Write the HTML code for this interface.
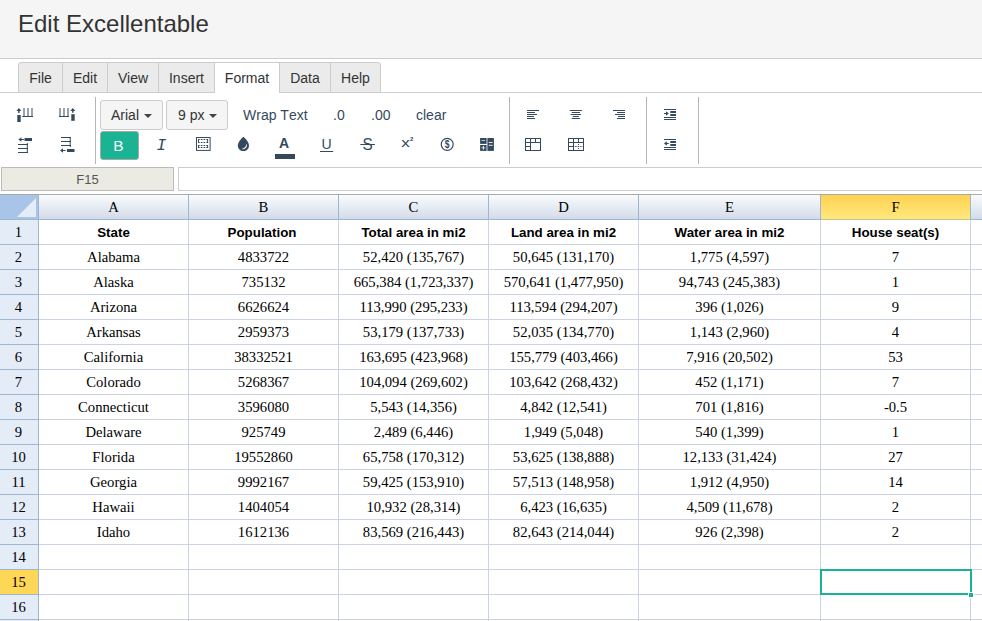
<!DOCTYPE html>
<html><head><meta charset="utf-8"><title>Edit Excellentable</title>
<style>
*{box-sizing:border-box;margin:0;padding:0}
html,body{width:982px;height:621px;overflow:hidden;background:#fff}
body{position:relative;font-family:"Liberation Sans",Arial,sans-serif;color:#333}
.abs{position:absolute}
#hdr{position:absolute;left:0;top:0;width:982px;height:59px;background:#f5f5f5;border-bottom:1px solid #ccc}
#title{position:absolute;left:18px;top:10px;font-size:24px;line-height:28px;color:#333;white-space:nowrap}
#tabs{position:absolute;left:18px;top:62px;height:31px;display:flex;border:1px solid #ccc;border-radius:3px 3px 0 0;background:#ebebeb}
#tabline{position:absolute;left:0;top:92px;width:982px;height:1px;background:#ccc}
.tab{height:29px;line-height:31px;font-size:14px;color:#333;text-align:center;border-right:1px solid #ccc}
.tab:last-child{border-right:0}
.tab.act{background:#fff;height:30px}
.sep{position:absolute;top:97px;width:1px;height:67px;background:#b4b6ba}
.dd{position:absolute;top:100px;height:30px;border:1px solid #ccc;border-radius:3px;background:#f5f5f5;font-size:14px;line-height:29px;color:#333;white-space:nowrap}
.tt{font-kerning:none;position:absolute;top:100px;height:30px;font-size:14px;line-height:31px;color:#34495e;white-space:nowrap}
.caret{display:inline-block;width:0;height:0;border-left:4px solid transparent;border-right:4px solid transparent;border-top:4px solid #444;vertical-align:middle;margin-left:5px;margin-top:-1px}
.ic{position:absolute}
#bold{position:absolute;left:100px;top:130.6px;width:39px;height:29.4px;background:#1ab394;border:1px solid #a9a9a0;border-radius:3px;color:#fff;font-size:15.5px;line-height:27px;text-align:center;padding-right:2px}
#name{position:absolute;left:1px;top:167px;width:173px;height:24px;background:#ecebe3;border:1px solid #bbb;font-size:13px;line-height:24px;text-align:center;color:#555}
#fx{position:absolute;left:178px;top:167px;width:810px;height:24px;background:#fff;border:1px solid #ccc}
#gridtop{position:absolute;left:0;top:194px;width:982px;height:1px;background:#aaa}
.ch{position:absolute;top:195px;height:25px;border-right:1px solid #9eb6ce;border-bottom:1px solid #9eb6ce;background:linear-gradient(#f9fcfd,#d3dbe9);font-family:"Liberation Serif",serif;font-size:14.667px;line-height:24px;text-align:center;color:#000}
.ch.sel{background:linear-gradient(#ffd150,#ffe97e);border-bottom-color:#c9c08f}
.rh{position:absolute;left:0;width:39px;height:25px;border-right:1px solid #9eb6ce;border-bottom:1px solid #9eb6ce;background:#e4ecf7;font-family:"Liberation Serif",serif;font-size:14.667px;line-height:24px;text-align:center;color:#000;padding-right:1px}
.rh.sel{background:#ffd757}
.cell{position:absolute;height:25px;border-right:1px solid #ccd3e6;border-bottom:1px solid #ccd3e6;font-family:"Liberation Serif",serif;font-size:14.667px;line-height:24px;text-align:center;color:#000;white-space:nowrap;overflow:hidden}
.cell.hd{font-family:"Liberation Sans",sans-serif;font-weight:bold;font-size:13.333px;line-height:26px}
.cell.pop{padding-right:3px}
#corner{position:absolute;left:0;top:195px;width:39px;height:25px;background:#a9c4e9;border-right:1px solid #9eb6ce;border-bottom:1px solid #9eb6ce}
#sel{position:absolute;left:820px;top:569px;width:152px;height:26px;border:2px solid #1ab394}
#selh{position:absolute;left:968px;top:592px;width:6px;height:6px;background:#1ab394;border:1px solid #fff}
</style></head><body>
<div id="hdr"><div id="title">Edit Excellentable</div></div>
<div id="tabline"></div>
<div id="tabs">
<div class="tab" style="width:44px">File</div><div class="tab" style="width:45px">Edit</div><div class="tab" style="width:51px">View</div><div class="tab" style="width:56px">Insert</div><div class="tab act" style="width:65px">Format</div><div class="tab" style="width:51px">Data</div><div class="tab" style="width:49px">Help</div>
</div>
<div class="sep" style="left:95px"></div>
<div class="sep" style="left:509px"></div>
<div class="sep" style="left:646px"></div>
<div class="sep" style="left:698px"></div>
<div class="dd" style="left:100px;width:63px;padding-left:10px">Arial<span class="caret"></span></div>
<div class="dd" style="left:166px;width:62px;padding-left:11px">9 px<span class="caret"></span></div>
<div class="tt" style="left:243px">Wrap Text</div>
<div class="tt" style="left:333px">.0</div>
<div class="tt" style="left:371px">.00</div>
<div class="tt" style="left:416px">clear</div>
<div id="bold">B</div>
<svg class="ic" style="left:0;top:0" width="982" height="170" viewBox="0 0 982 170" fill="#34495e" stroke="none" shape-rendering="auto">
<!-- icon1: insert col left -->
<g>
<path d="M18.9 108 L21.4 111 H19.6 V113 H18.2 V111 H16.4 Z"/>
<rect x="17.3" y="115" width="3.4" height="7"/>
<rect x="22.3" y="116" width="10.7" height="1"/><rect x="23.5" y="108" width="1" height="9"/><rect x="27.5" y="108" width="1" height="9"/><rect x="31.5" y="108" width="1" height="9"/>
</g>
<!-- icon2 -->
<g>
<path d="M72.8 108 L75.3 111 H73.5 V112.8 H72.1 V111 H70.3 Z"/>
<rect x="71.3" y="114.2" width="3.4" height="6.6"/>
<rect x="59" y="116" width="10" height="1"/><rect x="59.5" y="108" width="1" height="9"/><rect x="63.5" y="108" width="1" height="9"/><rect x="67.5" y="108" width="1" height="9"/>
</g>
<!-- icon3 -->
<g>
<path d="M18.4 139.5 L21.4 137.2 V138.9 H24 V140.1 H21.4 V141.8 Z"/>
<rect x="24.5" y="138" width="7.5" height="3"/>
<rect x="18" y="144" width="10" height="1"/><rect x="18" y="148" width="10" height="1"/><rect x="18" y="152" width="10" height="1"/><rect x="26.8" y="143" width="1" height="10"/>
</g>
<!-- icon4 -->
<g>
<path d="M60 150.5 L63 148.2 V149.9 H65.6 V151.1 H63 V152.8 Z"/>
<rect x="67" y="149" width="7.5" height="3"/>
<rect x="61" y="137" width="10" height="1"/><rect x="61" y="141" width="10" height="1"/><rect x="61" y="145" width="10" height="1"/><rect x="69.7" y="137" width="1" height="10"/>
</g>
<!-- italic -->
<text x="156.6" y="150.1" font-family="Liberation Mono,monospace" font-style="italic" font-size="16.5" fill="#34495e">I</text>
<!-- border icon -->
<rect x="196.5" y="137.5" width="13.6" height="12.9" fill="none" stroke="#34495e" stroke-width="1"/>
<path d="M198 139.5 H208 M198 142.5 H208 M198 145.5 H208 M198 147.5 H208" fill="none" stroke="#34495e" stroke-width="1" stroke-dasharray="1.7 1.07"/>
<path d="M198.5 139 V143 M207.6 139 V143 M198.5 145 V148 M207.6 145 V148" fill="none" stroke="#34495e" stroke-width="1"/>
<!-- tint -->
<path d="M243.4 136.7 C246.3 139.4 249 142.4 249 145.7 C249 148.7 246.5 151 243.4 151 C240.3 151 237.8 148.7 237.8 145.7 C237.8 142.4 240.5 139.4 243.4 136.7 Z"/>
<path d="M246.9 143.6 C247.7 147.7 244.8 149.9 241.6 148.9 C244.4 148.5 246.1 146.6 246.9 143.6 Z" fill="#fff"/>
<!-- A -->
<text x="284" y="148" text-anchor="middle" font-family="Liberation Sans,sans-serif" font-weight="bold" font-size="14">A</text>
<rect x="275" y="154" width="20" height="5"/>
<!-- U -->
<text x="326.6" y="149.3" text-anchor="middle" font-family="Liberation Sans,sans-serif" font-size="14">U</text>
<rect x="320" y="151" width="13.2" height="1"/>
<!-- S -->
<text transform="translate(367.7,150) scale(1,1.13)" text-anchor="middle" font-family="Liberation Sans,sans-serif" font-size="15.3">S</text>
<rect x="360.3" y="144" width="14.6" height="1"/>
<!-- x2 -->
<text transform="translate(401.3,147.2) scale(1.27,1)" font-family="Liberation Sans,sans-serif" font-size="13.5">x</text>
<text x="410" y="140.5" font-family="Liberation Sans,sans-serif" font-weight="bold" font-size="6">2</text>
<!-- dollar -->
<circle cx="447.2" cy="144.3" r="6" fill="none" stroke="#34495e" stroke-width="1.15"/>
<text transform="translate(447.2,147.7) scale(0.82,1)" text-anchor="middle" font-family="Liberation Sans,sans-serif" font-weight="bold" font-size="10.5">$</text>
<!-- calc grid -->
<rect x="480.1" y="138" width="6.5" height="5.9"/><rect x="480.1" y="145" width="6.5" height="5.9"/><rect x="487.4" y="138" width="6.5" height="12.9"/>
<rect x="481.6" y="140" width="3.4" height="1" fill="#c5cad3"/>
<rect x="481.4" y="147.3" width="4" height="1" fill="#c5cad3"/><rect x="482.9" y="145.9" width="1" height="3.8" fill="#d5ecd8"/>
<rect x="488.8" y="142" width="3.8" height="1" fill="#e8eaee"/><rect x="488.8" y="144.8" width="3.8" height="1" fill="#e8eaee"/>
<!-- align left -->
<rect x="527" y="110" width="12" height="1"/><rect x="527" y="112" width="8" height="1"/><rect x="527" y="114" width="10" height="1"/><rect x="527" y="116" width="7" height="1"/><rect x="527" y="118" width="8" height="1"/>
<!-- align center -->
<rect x="569.7" y="110" width="12.2" height="1"/><rect x="571.7" y="112" width="8.2" height="1"/><rect x="570.7" y="114" width="10.2" height="1"/><rect x="572.7" y="116" width="6.2" height="1"/><rect x="571.7" y="118" width="8.2" height="1"/>
<!-- align right -->
<rect x="613" y="110" width="12" height="1"/><rect x="617" y="112" width="8" height="1"/><rect x="615" y="114" width="10" height="1"/><rect x="618" y="116" width="7" height="1"/><rect x="617" y="118" width="8" height="1"/>
<!-- merge -->
<g fill="none" stroke="#34495e" stroke-width="1">
<rect x="525.5" y="138.5" width="15" height="12"/>
<path d="M525.5 142.5 H540.5 M525.5 146.5 H530.5 M530.5 138.5 V150.5 M535.5 138.5 V142.5"/>
<rect x="568.5" y="138.5" width="15" height="12"/>
<path d="M568.5 142.5 H583.5 M568.5 146.5 H573.5 M573.5 138.5 V150.5 M578.5 138.5 V142.5"/>
</g>
<rect x="574.8" y="146" width="1" height="1"/><rect x="576.4" y="146" width="1" height="1"/><rect x="578" y="146" width="1" height="1"/><rect x="579.8" y="146" width="1" height="1"/><rect x="581.4" y="146" width="1" height="1"/><rect x="578" y="144" width="1" height="1"/><rect x="578" y="148" width="1" height="1"/>
<!-- indent -->
<rect x="664" y="109" width="12" height="1"/><rect x="670.3" y="111" width="5.7" height="2"/><rect x="670.3" y="114" width="5.7" height="2"/><rect x="664" y="117" width="12" height="1"/><rect x="664" y="119" width="12" height="1"/>
<path d="M668.8 113.5 L666 111.3 V112.9 H664 V114.1 H666 V115.7 Z"/>
<!-- outdent -->
<rect x="664" y="139" width="12" height="1"/><rect x="670.3" y="141" width="5.7" height="2"/><rect x="670.3" y="144" width="5.7" height="2"/><rect x="664" y="147" width="12" height="1"/><rect x="664" y="149" width="12" height="1"/>
<path d="M664 143.5 L666.8 141.3 V142.9 H668.8 V144.1 H666.8 V145.7 Z"/>
</svg>

<div id="name">F15</div>
<div id="fx"></div>
<div id="gridtop"></div>
<div id="corner"><svg width="38" height="24" style="position:absolute;left:0;top:0"><polygon points="36,3 36,22 17,22" fill="#e4ecf7"/></svg></div>
<div class="ch" style="left:39px;width:150px">A</div>
<div class="ch" style="left:189px;width:150px">B</div>
<div class="ch" style="left:339px;width:150px">C</div>
<div class="ch" style="left:489px;width:150px">D</div>
<div class="ch" style="left:639px;width:182px">E</div>
<div class="ch sel" style="left:821px;width:150px">F</div>
<div class="ch" style="left:971px;width:12px"></div>
<div class="rh" style="top:220px">1</div>
<div class="cell hd" style="left:39px;top:220px;width:150px">State</div>
<div class="cell hd pop" style="left:189px;top:220px;width:150px">Population</div>
<div class="cell hd" style="left:339px;top:220px;width:150px">Total area in mi2</div>
<div class="cell hd" style="left:489px;top:220px;width:150px">Land area in mi2</div>
<div class="cell hd" style="left:639px;top:220px;width:182px">Water area in mi2</div>
<div class="cell hd" style="left:821px;top:220px;width:150px">House seat(s)</div>
<div class="cell" style="left:971px;top:220px;width:12px"></div>
<div class="rh" style="top:245px">2</div>
<div class="cell" style="left:39px;top:245px;width:150px">Alabama</div>
<div class="cell" style="left:189px;top:245px;width:150px">4833722</div>
<div class="cell" style="left:339px;top:245px;width:150px">52,420 (135,767)</div>
<div class="cell" style="left:489px;top:245px;width:150px">50,645 (131,170)</div>
<div class="cell" style="left:639px;top:245px;width:182px">1,775 (4,597)</div>
<div class="cell" style="left:821px;top:245px;width:150px">7</div>
<div class="cell" style="left:971px;top:245px;width:12px"></div>
<div class="rh" style="top:270px">3</div>
<div class="cell" style="left:39px;top:270px;width:150px">Alaska</div>
<div class="cell" style="left:189px;top:270px;width:150px">735132</div>
<div class="cell" style="left:339px;top:270px;width:150px">665,384 (1,723,337)</div>
<div class="cell" style="left:489px;top:270px;width:150px">570,641 (1,477,950)</div>
<div class="cell" style="left:639px;top:270px;width:182px">94,743 (245,383)</div>
<div class="cell" style="left:821px;top:270px;width:150px">1</div>
<div class="cell" style="left:971px;top:270px;width:12px"></div>
<div class="rh" style="top:295px">4</div>
<div class="cell" style="left:39px;top:295px;width:150px">Arizona</div>
<div class="cell" style="left:189px;top:295px;width:150px">6626624</div>
<div class="cell" style="left:339px;top:295px;width:150px">113,990 (295,233)</div>
<div class="cell" style="left:489px;top:295px;width:150px">113,594 (294,207)</div>
<div class="cell" style="left:639px;top:295px;width:182px">396 (1,026)</div>
<div class="cell" style="left:821px;top:295px;width:150px">9</div>
<div class="cell" style="left:971px;top:295px;width:12px"></div>
<div class="rh" style="top:320px">5</div>
<div class="cell" style="left:39px;top:320px;width:150px">Arkansas</div>
<div class="cell" style="left:189px;top:320px;width:150px">2959373</div>
<div class="cell" style="left:339px;top:320px;width:150px">53,179 (137,733)</div>
<div class="cell" style="left:489px;top:320px;width:150px">52,035 (134,770)</div>
<div class="cell" style="left:639px;top:320px;width:182px">1,143 (2,960)</div>
<div class="cell" style="left:821px;top:320px;width:150px">4</div>
<div class="cell" style="left:971px;top:320px;width:12px"></div>
<div class="rh" style="top:345px">6</div>
<div class="cell" style="left:39px;top:345px;width:150px">California</div>
<div class="cell" style="left:189px;top:345px;width:150px">38332521</div>
<div class="cell" style="left:339px;top:345px;width:150px">163,695 (423,968)</div>
<div class="cell" style="left:489px;top:345px;width:150px">155,779 (403,466)</div>
<div class="cell" style="left:639px;top:345px;width:182px">7,916 (20,502)</div>
<div class="cell" style="left:821px;top:345px;width:150px">53</div>
<div class="cell" style="left:971px;top:345px;width:12px"></div>
<div class="rh" style="top:370px">7</div>
<div class="cell" style="left:39px;top:370px;width:150px">Colorado</div>
<div class="cell" style="left:189px;top:370px;width:150px">5268367</div>
<div class="cell" style="left:339px;top:370px;width:150px">104,094 (269,602)</div>
<div class="cell" style="left:489px;top:370px;width:150px">103,642 (268,432)</div>
<div class="cell" style="left:639px;top:370px;width:182px">452 (1,171)</div>
<div class="cell" style="left:821px;top:370px;width:150px">7</div>
<div class="cell" style="left:971px;top:370px;width:12px"></div>
<div class="rh" style="top:395px">8</div>
<div class="cell" style="left:39px;top:395px;width:150px">Connecticut</div>
<div class="cell" style="left:189px;top:395px;width:150px">3596080</div>
<div class="cell" style="left:339px;top:395px;width:150px">5,543 (14,356)</div>
<div class="cell" style="left:489px;top:395px;width:150px">4,842 (12,541)</div>
<div class="cell" style="left:639px;top:395px;width:182px">701 (1,816)</div>
<div class="cell" style="left:821px;top:395px;width:150px">-0.5</div>
<div class="cell" style="left:971px;top:395px;width:12px"></div>
<div class="rh" style="top:420px">9</div>
<div class="cell" style="left:39px;top:420px;width:150px">Delaware</div>
<div class="cell" style="left:189px;top:420px;width:150px">925749</div>
<div class="cell" style="left:339px;top:420px;width:150px">2,489 (6,446)</div>
<div class="cell" style="left:489px;top:420px;width:150px">1,949 (5,048)</div>
<div class="cell" style="left:639px;top:420px;width:182px">540 (1,399)</div>
<div class="cell" style="left:821px;top:420px;width:150px">1</div>
<div class="cell" style="left:971px;top:420px;width:12px"></div>
<div class="rh" style="top:445px">10</div>
<div class="cell" style="left:39px;top:445px;width:150px">Florida</div>
<div class="cell" style="left:189px;top:445px;width:150px">19552860</div>
<div class="cell" style="left:339px;top:445px;width:150px">65,758 (170,312)</div>
<div class="cell" style="left:489px;top:445px;width:150px">53,625 (138,888)</div>
<div class="cell" style="left:639px;top:445px;width:182px">12,133 (31,424)</div>
<div class="cell" style="left:821px;top:445px;width:150px">27</div>
<div class="cell" style="left:971px;top:445px;width:12px"></div>
<div class="rh" style="top:470px">11</div>
<div class="cell" style="left:39px;top:470px;width:150px">Georgia</div>
<div class="cell" style="left:189px;top:470px;width:150px">9992167</div>
<div class="cell" style="left:339px;top:470px;width:150px">59,425 (153,910)</div>
<div class="cell" style="left:489px;top:470px;width:150px">57,513 (148,958)</div>
<div class="cell" style="left:639px;top:470px;width:182px">1,912 (4,950)</div>
<div class="cell" style="left:821px;top:470px;width:150px">14</div>
<div class="cell" style="left:971px;top:470px;width:12px"></div>
<div class="rh" style="top:495px">12</div>
<div class="cell" style="left:39px;top:495px;width:150px">Hawaii</div>
<div class="cell" style="left:189px;top:495px;width:150px">1404054</div>
<div class="cell" style="left:339px;top:495px;width:150px">10,932 (28,314)</div>
<div class="cell" style="left:489px;top:495px;width:150px">6,423 (16,635)</div>
<div class="cell" style="left:639px;top:495px;width:182px">4,509 (11,678)</div>
<div class="cell" style="left:821px;top:495px;width:150px">2</div>
<div class="cell" style="left:971px;top:495px;width:12px"></div>
<div class="rh" style="top:520px">13</div>
<div class="cell" style="left:39px;top:520px;width:150px">Idaho</div>
<div class="cell" style="left:189px;top:520px;width:150px">1612136</div>
<div class="cell" style="left:339px;top:520px;width:150px">83,569 (216,443)</div>
<div class="cell" style="left:489px;top:520px;width:150px">82,643 (214,044)</div>
<div class="cell" style="left:639px;top:520px;width:182px">926 (2,398)</div>
<div class="cell" style="left:821px;top:520px;width:150px">2</div>
<div class="cell" style="left:971px;top:520px;width:12px"></div>
<div class="rh" style="top:545px">14</div>
<div class="cell" style="left:39px;top:545px;width:150px"></div>
<div class="cell" style="left:189px;top:545px;width:150px"></div>
<div class="cell" style="left:339px;top:545px;width:150px"></div>
<div class="cell" style="left:489px;top:545px;width:150px"></div>
<div class="cell" style="left:639px;top:545px;width:182px"></div>
<div class="cell" style="left:821px;top:545px;width:150px"></div>
<div class="cell" style="left:971px;top:545px;width:12px"></div>
<div class="rh sel" style="top:570px">15</div>
<div class="cell" style="left:39px;top:570px;width:150px"></div>
<div class="cell" style="left:189px;top:570px;width:150px"></div>
<div class="cell" style="left:339px;top:570px;width:150px"></div>
<div class="cell" style="left:489px;top:570px;width:150px"></div>
<div class="cell" style="left:639px;top:570px;width:182px"></div>
<div class="cell" style="left:821px;top:570px;width:150px"></div>
<div class="cell" style="left:971px;top:570px;width:12px"></div>
<div class="rh" style="top:595px">16</div>
<div class="cell" style="left:39px;top:595px;width:150px"></div>
<div class="cell" style="left:189px;top:595px;width:150px"></div>
<div class="cell" style="left:339px;top:595px;width:150px"></div>
<div class="cell" style="left:489px;top:595px;width:150px"></div>
<div class="cell" style="left:639px;top:595px;width:182px"></div>
<div class="cell" style="left:821px;top:595px;width:150px"></div>
<div class="cell" style="left:971px;top:595px;width:12px"></div>
<div class="rh" style="top:620px">17</div>
<div class="cell" style="left:39px;top:620px;width:150px"></div>
<div class="cell" style="left:189px;top:620px;width:150px"></div>
<div class="cell" style="left:339px;top:620px;width:150px"></div>
<div class="cell" style="left:489px;top:620px;width:150px"></div>
<div class="cell" style="left:639px;top:620px;width:182px"></div>
<div class="cell" style="left:821px;top:620px;width:150px"></div>
<div class="cell" style="left:971px;top:620px;width:12px"></div><div id="sel"></div><div id="selh"></div>
</body></html>
